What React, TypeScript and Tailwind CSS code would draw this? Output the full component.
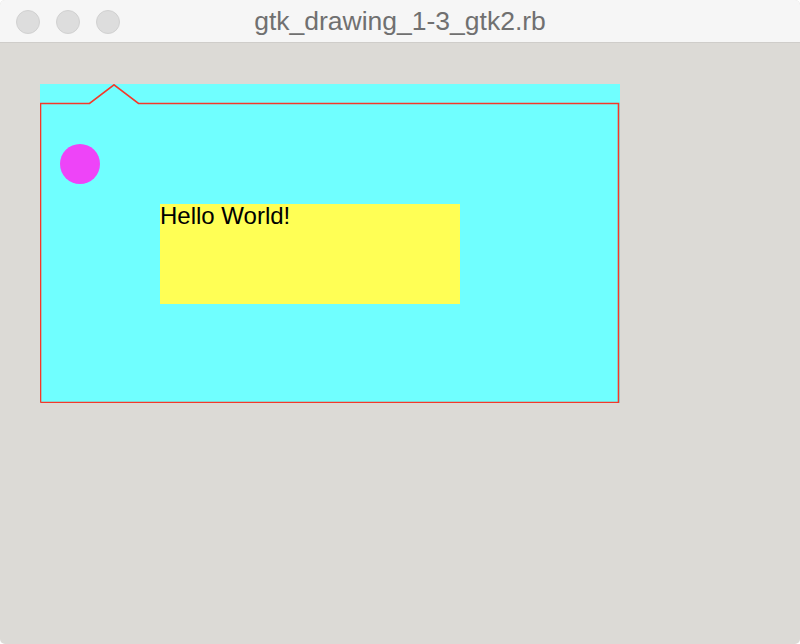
import React from "react";

export default function App() {
  return (
    <div className="w-[800px] h-[644px] flex flex-col overflow-hidden rounded-[5px] bg-[#dcdad6]" style={{ fontFamily: '"Liberation Sans", Arial, sans-serif' }}>
      <div className="relative h-[43px] shrink-0 flex items-center justify-center bg-[#f6f6f6] border-b border-[#cfcdca]">
        <div className="absolute left-[16px] top-[10px] flex gap-[16px]">
          <div className="w-[24px] h-[24px] rounded-full bg-[#dddddd] border border-[#d1d1d1]" />
          <div className="w-[24px] h-[24px] rounded-full bg-[#dddddd] border border-[#d1d1d1]" />
          <div className="w-[24px] h-[24px] rounded-full bg-[#dddddd] border border-[#d1d1d1]" />
        </div>
        <span className="text-[26.5px] text-[#707070] leading-none">gtk_drawing_1-3_gtk2.rb</span>
      </div>
      <div className="pl-[40px] pt-[41px]">
        <div className="relative w-[580px] h-[319px] bg-[#70ffff]">
          <svg className="absolute left-0 top-0" width="580" height="319" viewBox="0 0 580 319">
            <polyline
              points="0.5,318.5 0.5,19.5 49.5,19.5 74,0.8 98.5,19.5 578.5,19.5 578.5,318.5 0.5,318.5"
              fill="none"
              stroke="#f5382a"
              strokeWidth="1.6"
            />
          </svg>
          <div className="absolute left-[20px] top-[60px] w-[40px] h-[40px] rounded-full bg-[#ee44f8]" />
          <div className="absolute left-[120px] top-[120px] w-[300px] h-[100px] bg-[#ffff55]">
            <span className="block text-[24px] leading-[24px] text-black">Hello World!</span>
          </div>
        </div>
      </div>
    </div>
  );
}
